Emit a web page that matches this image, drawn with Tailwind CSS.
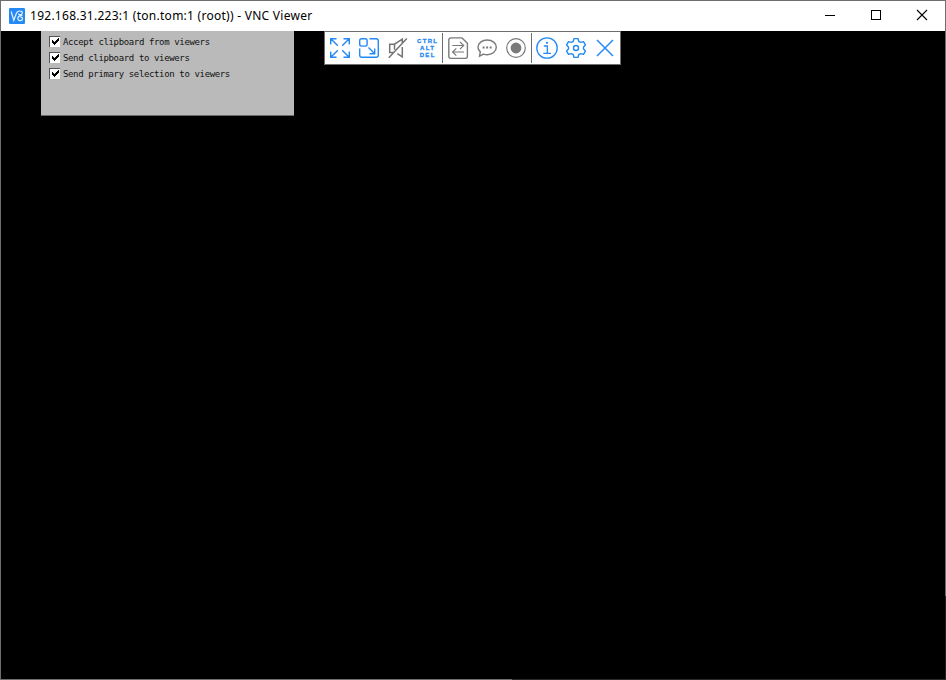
<!DOCTYPE html>
<html lang="en">
<head>
  <meta charset="utf-8" />
  <meta name="viewport" content="width=device-width, initial-scale=1" />
  <title>VNC Viewer</title>
  <script src="https://cdn.jsdelivr.net/npm/@tailwindcss/browser@4"></script>
</head>
<body class="bg-black">
  <div class="flex flex-col w-[946px] h-[680px] overflow-hidden border-t border-l border-[#6e6e6e]">
    <!-- Title bar -->
    <header class="flex items-center h-[30px] shrink-0 bg-white border-r border-[#6e6e6e]">
      <svg class="ml-2 w-4 h-4 shrink-0" viewBox="0 0 16 16" fill="none">
        <rect width="16" height="16" rx="1.2" fill="#2489f5" />
        <path d="M2.200 3.500L4.800 12.300L7.500 5Q8.600 2.900 11 3Q13.400 3 13.300 5Q13 6.800 10.800 6.800Q9.600 6.800 9.600 5.600M13.400 7.400Q9 7.600 8.800 10.300Q9 12.800 11.300 12.700Q13.600 12.500 13.500 10.600Q13.300 9 11.400 9.200" stroke="#e4f3ff" stroke-width="1.2" />
      </svg>
      <h1 class="ml-[5px] w-[300px] whitespace-nowrap font-['Noto_Sans',sans-serif] text-[12px] leading-4 tracking-[0.265px] text-black">192.168.31.223:1 (ton.tom:1 (root)) - VNC Viewer</h1>
      <div class="ml-auto mr-[17px] mb-[2px] flex gap-[34px]">
        <svg class="w-3 h-3" viewBox="0 0 12 12" shape-rendering="crispEdges"><path d="M1 6.5h10" stroke="#000" /></svg>
        <svg class="w-3 h-3" viewBox="0 0 12 12" fill="none" shape-rendering="crispEdges"><path d="M1.500 1.500h9v9h-9z" stroke="#000" /></svg>
        <svg class="w-3 h-3" viewBox="0 0 12 12"><path d="M1 1l10 10M11 1L1 11" stroke="#000" stroke-width="1.100" /></svg>
      </div>
    </header>

    <!-- Remote desktop -->
    <main class="relative flex-1 bg-black">
      <section class="ml-10 w-[253px] h-[85px] pt-[3px] pl-2 bg-[#bababa] border-b border-[#6a6a6a] font-['DejaVu_Sans_Mono',monospace] text-[9px] tracking-[-0.36px] text-[#111]">
        <div class="flex items-center h-4 gap-[3px]">
          <svg class="mb-[2px] w-[11px] h-[11px]" viewBox="0 0 11 11" fill="none" shape-rendering="crispEdges"><path d="M0 0h11v11h-11z" fill="#fff" /><path d="M0 .5h11M.5 0v11" stroke="#555" /><path d="M3 4v3l2 2l5-5v-2l-5 4z" fill="#000" /></svg>
          <span class="pt-px whitespace-nowrap">Accept clipboard from viewers</span>
        </div>
        <div class="flex items-center h-4 gap-[3px]">
          <svg class="mb-[2px] w-[11px] h-[11px]" viewBox="0 0 11 11" fill="none" shape-rendering="crispEdges"><path d="M0 0h11v11h-11z" fill="#fff" /><path d="M0 .5h11M.5 0v11" stroke="#555" /><path d="M3 4v3l2 2l5-5v-2l-5 4z" fill="#000" /></svg>
          <span class="pt-px whitespace-nowrap">Send clipboard to viewers</span>
        </div>
        <div class="flex items-center h-4 gap-[3px]">
          <svg class="mb-[2px] w-[11px] h-[11px]" viewBox="0 0 11 11" fill="none" shape-rendering="crispEdges"><path d="M0 0h11v11h-11z" fill="#fff" /><path d="M0 .5h11M.5 0v11" stroke="#555" /><path d="M3 4v3l2 2l5-5v-2l-5 4z" fill="#000" /></svg>
          <span class="pt-px whitespace-nowrap">Send primary selection to viewers</span>
        </div>
      </section>

      <!-- Floating toolbar -->
      <nav class="absolute top-0 left-[323px] flex items-center w-[297px] h-[34px] pl-1 bg-white border border-[#6e6e6e] text-[#2489f5]">
        <div class="flex gap-[7px]">
          <svg class="w-[22px] h-[22px]" viewBox="0 0 22 22" fill="none" stroke="currentColor" stroke-width="1.4">
            <path d="M1.7 7.5V1.7h5.8M14.5 1.7h5.8v5.8M20.3 14.5v5.8h-5.8M7.5 20.3H1.7v-5.8M2 2l6.8 6.8M20 2l-6.8 6.8M20 20l-6.8-6.8M2 20l6.8-6.8" />
          </svg>
          <svg class="w-[22px] h-[22px]" viewBox="0 0 22 22" fill="none" stroke="currentColor" stroke-width="1.4">
            <rect x="1.7" y="1.7" width="7.4" height="7.4" rx="1.8" />
            <path d="M11.5 1.7h6.6a2.2 2.2 0 0 1 2.2 2.2v14.2a2.2 2.2 0 0 1-2.2 2.2H3.9a2.2 2.2 0 0 1-2.2-2.2v-6.6M10.5 10.5l6 6M11.5 16.7h5.2v-5.2" />
          </svg>
          <svg class="w-[22px] h-[22px] text-[#747474]" viewBox="0 0 22 22" fill="none" stroke="currentColor" stroke-width="1.5">
            <path d="M6.2 15.500H2.700V7.200h4.800l7.800-5v4M15.300 10v9.800l-5-3.200M7.500 7.200v5.600M1.800 20.700L19.800 1.600" />
          </svg>
          <svg class="w-[22px] h-[22px]" viewBox="0 0 22 22" fill="currentColor" stroke="currentColor" stroke-width=".3" font-family="Liberation Sans, sans-serif" font-size="6" font-weight="700">
            <text x="1" y="6" textLength="20">CTRL</text>
            <text x="4" y="13" textLength="14">ALT</text>
            <text x="3.700" y="20" textLength="14.600">DEL</text>
          </svg>
        </div>
        <i class="mx-1 w-px h-[30px] bg-[#6e6e6e]"></i>
        <div class="flex gap-[7px] text-[#7a7a7a]">
          <svg class="w-[22px] h-[22px]" viewBox="0 0 22 22" fill="none" stroke="currentColor" stroke-width="1.4">
            <path d="M4 .9h11l5.400 5.300v13a2.200 2.200 0 0 1-2.200 2.200H4a2.200 2.200 0 0 1-2.200-2.200V3.100A2.200 2.200 0 0 1 4 .9z" />
            <path d="M5.300 8.500h11.300M13 4.800l3.700 3.700l-3.700 3.700M17 15H5.700M9.300 11.300L5.600 15l3.700 3.700" stroke-width="1.200" />
          </svg>
          <svg class="w-[22px] h-[22px]" viewBox="0 0 22 22" fill="none" stroke="currentColor" stroke-width="1.4">
            <path d="M3.5 19.3l.8-4.4C2.8 13.600 2 12 2 10.300 2 6.200 6 3 11.200 3s9.100 3.200 9.100 7.300-4 7.400-9.100 7.400c-1.300 0-2.600-.2-3.700-.6z" />
            <path d="M6.600 9.600h2v2h-2zM10.100 9.600h2v2h-2zM13.600 9.600h2v2h-2z" fill="currentColor" stroke="none" />
          </svg>
          <svg class="w-[22px] h-[22px]" viewBox="0 0 22 22" fill="none" stroke="currentColor" stroke-width="1.2">
            <circle cx="11" cy="11" r="9.300" />
            <circle cx="11" cy="11" r="5.400" fill="currentColor" stroke="none" />
          </svg>
        </div>
        <i class="mx-1 w-px h-[30px] bg-[#6e6e6e]"></i>
        <div class="flex gap-[7px]">
          <svg class="w-[22px] h-[22px]" viewBox="0 0 22 22" fill="none" stroke="currentColor" stroke-width="1.3">
            <circle cx="11" cy="11" r="10.200" />
            <path d="M7.800 9h3.500v7M7.300 16.300h7.700" />
            <circle cx="11" cy="5.800" r="1.100" fill="currentColor" stroke="none" />
          </svg>
          <svg class="w-[22px] h-[22px]" viewBox="0 0 22 22" fill="none" stroke="currentColor" stroke-width="1.4" stroke-linejoin="round">
            <path d="M9 1.600h4l.7 2.700 2 1.100 2.800-.8 2 3.500-2 2v1.800l2 2-2 3.500-2.800-.8-2 1.100-.7 2.700H9l-.7-2.700-2-1.100-2.800.8-2-3.500 2-2v-1.800l-2-2 2-3.500 2.800.8 2-1.100z" />
            <circle cx="11" cy="11" r="2.500" />
          </svg>
          <svg class="w-[22px] h-[22px]" viewBox="0 0 22 22" fill="none" stroke="currentColor" stroke-width="1.500">
            <path d="M3 3l16 16M19 3L3 19" />
          </svg>
        </div>
      </nav>

      <!-- Window edges -->
      <i class="absolute right-0 top-0 w-px h-[565px] bg-[#6e6e6e]"></i>
      <i class="absolute right-0 bottom-0 w-px h-[84px] bg-[#222222]"></i>
      <i class="absolute left-0 bottom-0 w-[511px] h-px bg-[#6e6e6e]"></i>
      <i class="absolute right-0 bottom-0 w-[434px] h-px bg-[#2b2b2b]"></i>
    </main>
  </div>
</body>
</html>
